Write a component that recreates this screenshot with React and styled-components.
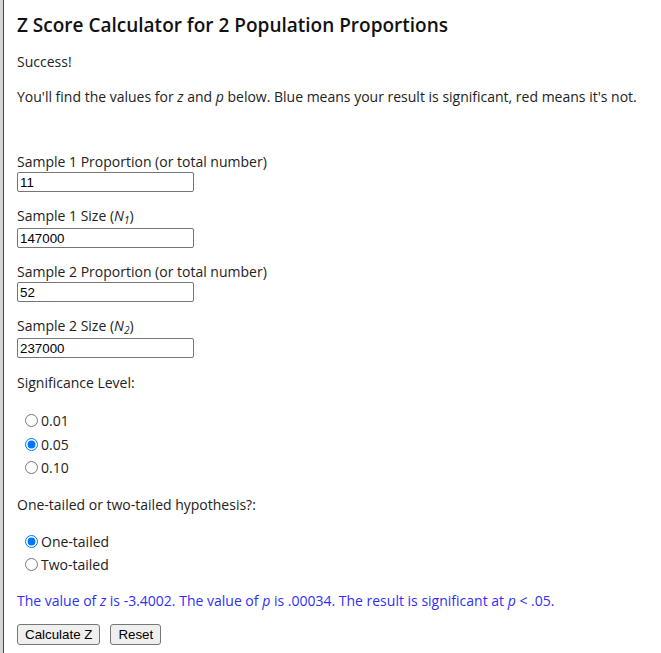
import React from "react";
import styled, { createGlobalStyle } from "styled-components";

const Global = createGlobalStyle`
  html, body { margin: 0; padding: 0; background: #fff; }
  body { font-family: "Open Sans", "Liberation Sans", sans-serif; color: #222; }
`;

const Frame = styled.div`
  border-left: 3px solid #d6d6d6;
  min-height: 653px;
  box-sizing: border-box;
`;

const Page = styled.div`
  border-left: 1px solid #444;
  min-height: 653px;
  box-sizing: border-box;
  padding: 11px 0 0 13px;
`;

const Title = styled.h1`
  margin: 0;
  font-size: 19px;
  font-weight: 600;
  line-height: 28px;
  color: #111;
`;

const Text = styled.p`
  margin: ${(p) => p.$top}px 0 0;
  font-size: 14px;
  line-height: 19px;
  color: ${(p) => p.$color || "#222"};
`;

const Field = styled.div`
  margin-top: ${(p) => p.$top}px;
  display: flex;
  flex-direction: column;
  align-items: flex-start;
`;

const Label = styled.label`
  font-size: 14px;
  line-height: 19px;
  height: ${(p) => (p.$sub ? 20 : 18)}px;
  sub {
    font-size: 10px;
    line-height: 0;
    vertical-align: -3px;
  }
`;

const Input = styled.input`
  margin-top: 2px;
  width: 177px;
  height: 20px;
  box-sizing: border-box;
  border: 1px solid #767676;
  border-radius: 2px;
  padding: 1px 2px;
  font-family: "Liberation Sans", Arial, sans-serif;
  font-size: 13.33px;
  color: #000;
  background: #fff;
`;

const Group = styled.div`
  margin-top: ${(p) => p.$top}px;
  display: flex;
  flex-direction: column;
`;

const Choice = styled.label`
  display: flex;
  align-items: center;
  height: ${(p) => p.$h}px;
  font-size: 14px;
  color: #222;
  input {
    margin: 0 3px 0 8px;
    width: 13px;
    height: 13px;
  }
`;

const Buttons = styled.div`
  margin-top: 14px;
  display: flex;
  gap: 10px;
`;

const Button = styled.button`
  height: 21px;
  padding: 1px 7px;
  border: 1px solid #767676;
  border-radius: 3px;
  background: #efefef;
  font-family: "Liberation Sans", Arial, sans-serif;
  font-size: 13.33px;
  color: #000;
`;

const fields = [
  { label: "Sample 1 Proportion (or total number)", value: "11", top: 46 },
  { label: "Sample 1 Size (", sub: "1", value: "147000", top: 14 },
  { label: "Sample 2 Proportion (or total number)", value: "52", top: 14 },
  { label: "Sample 2 Size (", sub: "2", value: "237000", top: 14 },
];

export default function App() {
  return (
    <>
      <Global />
      <Frame>
        <Page>
          <Title>Z Score Calculator for 2 Population Proportions</Title>
          <Text $top={13}>Success!</Text>
          <Text $top={16}>
            You'll find the values for <i>z</i> and <i>p</i> below. Blue means your result is significant, red means it's not.
          </Text>
          {fields.map((f, i) => (
            <Field key={i} $top={f.top}>
              <Label $sub={!!f.sub}>
                {f.label}
                {f.sub && (
                  <>
                    <i>N</i>
                    <sub><i>{f.sub}</i></sub>)
                  </>
                )}
              </Label>
              <Input defaultValue={f.value} />
            </Field>
          ))}
          <Text $top={15}>Significance Level:</Text>
          <Group $top={17}>
            {["0.01", "0.05", "0.10"].map((v) => (
              <Choice key={v} $h={23.5}>
                <input type="radio" name="sig" defaultChecked={v === "0.05"} />
                {v}
              </Choice>
            ))}
          </Group>
          <Text $top={15}>One-tailed or two-tailed hypothesis?:</Text>
          <Group $top={16}>
            {["One-tailed", "Two-tailed"].map((v) => (
              <Choice key={v} $h={23}>
                <input type="radio" name="tail" defaultChecked={v === "One-tailed"} />
                {v}
              </Choice>
            ))}
          </Group>
          <Text $top={15} $color="#2f2ff5">
            The value of <i>z</i> is -3.4002. The value of <i>p</i> is .00034. The result is significant at <i>p</i> &lt; .05.
          </Text>
          <Buttons>
            <Button>Calculate Z</Button>
            <Button>Reset</Button>
          </Buttons>
        </Page>
      </Frame>
    </>
  );
}
